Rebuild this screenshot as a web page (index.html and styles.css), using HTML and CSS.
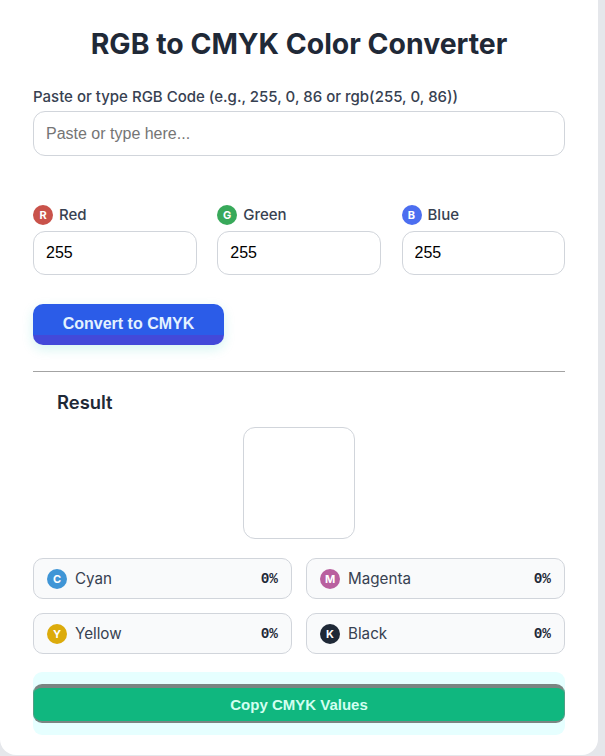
FILE: index.html
```html
<!DOCTYPE html>
<html lang="en">
<head>
	<meta charset="UTF-8">
	<meta name="viewport" content="width=device-width, initial-scale=1.0">
	<title>RGB to CMYK Color Converter</title>
	<link rel="stylesheet" href="styles.css">
</head>
<body>
	<div class="card">
		<h1 class="title">RGB to CMYK Color Converter</h1>

		<label class="paste-label" for="rgbCode">Paste or type RGB Code (e.g., 255, 0, 86 or rgb(255, 0, 86))</label>
		<input class="text-input paste-input" id="rgbCode" type="text" placeholder="Paste or type here...">

		<div class="channels">
			<div class="channel">
				<label class="channel-label"><span class="badge red">R</span>Red</label>
				<input class="text-input channel-input" type="text" value="255">
			</div>
			<div class="channel">
				<label class="channel-label"><span class="badge green">G</span>Green</label>
				<input class="text-input channel-input" type="text" value="255">
			</div>
			<div class="channel">
				<label class="channel-label"><span class="badge blue">B</span>Blue</label>
				<input class="text-input channel-input" type="text" value="255">
			</div>
		</div>

		<button class="convert-button">Convert to CMYK</button>

		<hr class="divider">

		<h2 class="result-title">Result</h2>
		<div class="preview"></div>

		<div class="values">
			<div class="value-row">
				<span class="value-name"><span class="badge cyan">C</span>Cyan</span>
				<span class="value-number">0%</span>
			</div>
			<div class="value-row">
				<span class="value-name"><span class="badge magenta">M</span>Magenta</span>
				<span class="value-number">0%</span>
			</div>
			<div class="value-row">
				<span class="value-name"><span class="badge yellow">Y</span>Yellow</span>
				<span class="value-number">0%</span>
			</div>
			<div class="value-row">
				<span class="value-name"><span class="badge black">K</span>Black</span>
				<span class="value-number">0%</span>
			</div>
		</div>

		<button class="copy-button">Copy CMYK Values</button>
	</div>
</body>
</html>
```

FILE: styles.css
```css
html, body {
	height: 100%;
}

body {
	margin: 0;
	background-color: #e5e7eb;
	font-family: "Inter", "Liberation Sans", sans-serif;
	overflow: hidden;
}

.card {
	box-sizing: border-box;
	width: 598px;
	height: 755px;
	padding: 28px 33px 0;
	background-color: #fff;
	border-radius: 0 0 16px 16px;
}

.title {
	margin: 0 0 28px;
	font-size: 28.4px;
	line-height: 32px;
	font-weight: 700;
	text-align: center;
	color: #1f2937;
}

.paste-label {
	display: block;
	margin-bottom: 6px;
	font-size: 15px;
	line-height: 17px;
	font-weight: 500;
	color: #374151;
}

.text-input {
	display: block;
	box-sizing: border-box;
	width: 100%;
	border: 1px solid #d1d5db;
	border-radius: 12px;
	background-color: #fff;
	font-family: "Liberation Sans", Arial, sans-serif;
	font-size: 16px;
	color: #000;
}

.paste-input {
	height: 45px;
	padding: 0 12px;
}

.paste-input::placeholder {
	color: #757575;
}

.channels {
	display: grid;
	grid-template-columns: repeat(3, 1fr);
	column-gap: 20.75px;
	margin-top: 48px;
}

.channel-label {
	display: flex;
	align-items: center;
	gap: 6px;
	height: 21px;
	margin-bottom: 6px;
	font-size: 15px;
	font-weight: 500;
	color: #374151;
}

.channel-input {
	height: 44px;
	padding: 0 12px;
}

.badge {
	display: flex;
	align-items: center;
	justify-content: center;
	flex-shrink: 0;
	width: 20px;
	height: 20px;
	border-radius: 50%;
	font-size: 11px;
	font-weight: 700;
	color: #fff;
}

.red { background-color: #c9524a; }
.green { background-color: #38a95a; }
.blue { background-color: #4c6ef0; }
.cyan { background-color: #3f95d6; }
.magenta { background-color: #b9609f; }
.yellow { background-color: #dcab0b; }
.black { background-color: #1f2937; }

.convert-button {
	display: block;
	width: 191px;
	height: 41px;
	margin-top: 29px;
	padding: 0 0 2px;
	border: none;
	border-radius: 10px;
	background: linear-gradient(#2b5ce8 76%, #4349d9 76%);
	box-shadow: 0 4px 12px rgba(16, 200, 180, 0.18);
	font-family: "Liberation Sans", Arial, sans-serif;
	font-size: 16px;
	font-weight: 700;
	color: #e4f2ff;
}

.divider {
	height: 1px;
	margin: 26px 0 0;
	border: none;
	background-color: #a3a3a3;
}

.result-title {
	margin: 19px 0 0 24px;
	font-size: 18.4px;
	line-height: 22px;
	font-weight: 600;
	color: #1f2937;
}

.preview {
	box-sizing: border-box;
	width: 112px;
	height: 112px;
	margin: 14px auto 0;
	border: 1px solid #d1d5db;
	border-radius: 12px;
}

.values {
	display: grid;
	grid-template-columns: repeat(2, 1fr);
	gap: 14px;
	margin-top: 19px;
}

.value-row {
	display: flex;
	align-items: center;
	justify-content: space-between;
	box-sizing: border-box;
	height: 41px;
	padding: 0 13px;
	border: 1px solid #d1d5db;
	border-radius: 10px;
	background-color: #f9fafb;
}

.value-name {
	display: flex;
	align-items: center;
	gap: 8px;
	font-size: 15.2px;
	font-weight: 400;
	color: #374151;
}

.value-number {
	font-family: "Liberation Mono", monospace;
	font-size: 14.4px;
	font-weight: 700;
	color: #1f2937;
}

.copy-button {
	display: block;
	box-sizing: border-box;
	width: 100%;
	height: 39px;
	margin-top: 30px;
	padding: 0 0 1px;
	border: 1px solid #4f9f85;
	border-top: 4px solid #7a8582;
	border-bottom: 2px solid #7a8582;
	border-radius: 9px;
	background-color: #10b77f;
	box-shadow: 0 -12px 0 #e6ffff, 0 12px 0 #e6ffff;
	font-family: "Liberation Sans", Arial, sans-serif;
	font-size: 15px;
	font-weight: 700;
	color: #d2fff0;
}
```
